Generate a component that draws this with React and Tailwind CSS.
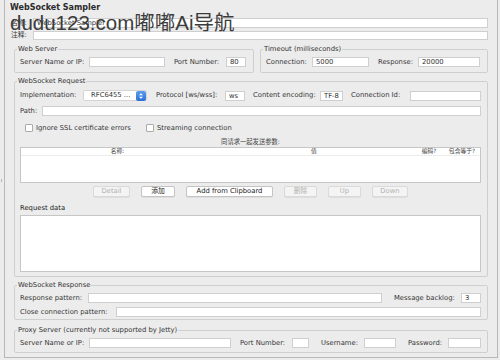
import React from "react";

function Field({ cls, value = "" }) {
  return (
    <input
      readOnly
      value={value}
      className={`h-[10px] bg-white border border-[#cfcfcf] px-[3px] text-[6.8px] text-[#333] outline-none leading-none ${cls}`}
    />
  );
}

function Btn({ cls, children, disabled }) {
  return (
    <div
      className={`h-[11px] flex items-center justify-center rounded-[2px] border shadow-[0_0.5px_0.5px_rgba(0,0,0,0.12)] whitespace-nowrap ${
        disabled ? "bg-[#f4f4f4] border-[#dadada] text-[#b2b2b2]" : "bg-white border-[#c4c4c4] text-[#222]"
      } ${cls}`}
    >
      {children}
    </div>
  );
}

function Check({ cls = "" }) {
  return <span className={`block w-[8px] h-[8px] shrink-0 bg-white border border-[#ababab] rounded-[1px] ${cls}`} />;
}

export default function App() {
  return (
    <div className="w-[500px] h-[360px] bg-[#ececec] relative overflow-hidden font-['DejaVu_Sans','Noto_Sans_CJK_SC',sans-serif] text-[6.8px] text-[#363636] leading-none">
      <div className="absolute left-[1px] top-[179px] w-[1px] h-[3px] bg-[#b4b4b4]" />

      <div className="ml-[4px] w-[494px] h-[358px] border-l border-r border-b border-[#b8b8b8]">
        <div className="ml-[5px] pt-[3px] h-[13px] text-[8px] font-bold text-[#2a2a2a] leading-[10px]">
          WebSocket Sampler
        </div>

        <div className="mt-[5px] ml-[6px] flex items-center h-[10px]">
          <span className="w-[22px] shrink-0">名称:</span>
          <Field cls="w-[455px] text-[#9a9a9a]" value="WebSocket Sampler" />
        </div>
        <div className="mt-[3px] ml-[6px] flex items-center h-[9px]">
          <span className="w-[22px] shrink-0">注释:</span>
          <Field cls="w-[455px] !h-[9px]" />
        </div>

        <div className="mt-[5px] ml-[9px] flex gap-[6px]">
          <fieldset className="min-w-0 w-[240px] border border-[#cfcfcf] rounded-[2px] pl-[5px] pr-[6px] pt-[4px] pb-[5px]">
            <legend className="-ml-[3px] px-[1px] h-[8px] leading-[8px] text-[#333]">Web Server</legend>
            <div className="flex items-center h-[10px]">
              <span className="w-[69px] shrink-0 whitespace-nowrap">Server Name or IP:</span>
              <Field cls="w-[76px]" />
              <span className="ml-[9px] w-[52px] shrink-0 whitespace-nowrap">Port Number:</span>
              <Field cls="w-[20px]" value="80" />
            </div>
          </fieldset>
          <fieldset className="min-w-0 w-[228px] border border-[#cfcfcf] rounded-[2px] pl-[5px] pr-[6px] pt-[4px] pb-[5px]">
            <legend className="-ml-[3px] px-[1px] h-[8px] leading-[8px] text-[#333]">Timeout (milliseconds)</legend>
            <div className="flex items-center h-[10px]">
              <span className="w-[46px] shrink-0 whitespace-nowrap">Connection:</span>
              <Field cls="w-[57px]" value="5000" />
              <span className="ml-[9px] w-[40px] shrink-0 whitespace-nowrap">Response:</span>
              <Field cls="w-[62px]" value="20000" />
            </div>
          </fieldset>
        </div>

        <fieldset className="min-w-0 mt-[4px] ml-[9px] w-[474px] border border-[#cfcfcf] rounded-[2px] pl-[5px] pr-[6px] pt-[5px] pb-[4px]">
          <legend className="-ml-[3px] px-[1px] h-[8px] leading-[8px] text-[#333]">WebSocket Request</legend>
          <div className="flex items-center h-[11px]">
            <span className="w-[63px] shrink-0 whitespace-nowrap">Implementation:</span>
            <div className="w-[64px] h-[11px] shrink-0 flex items-center bg-white rounded-[2px] border border-[#d4d4d4]">
              <span className="flex-1 pl-[7px] text-[#333] whitespace-nowrap">RFC6455 ...</span>
              <svg width="10" height="10" viewBox="0 0 10 10" className="shrink-0">
                <defs>
                  <linearGradient id="bg" x1="0" y1="0" x2="0" y2="1">
                    <stop offset="0" stopColor="#5b9cf0" />
                    <stop offset="1" stopColor="#2c6fd8" />
                  </linearGradient>
                </defs>
                <rect x="0" y="0" width="10" height="10" rx="2" fill="url(#bg)" />
                <path d="M3 4.3 L5 2.3 L7 4.3 Z" fill="#fff" />
                <path d="M3 5.7 L5 7.7 L7 5.7 Z" fill="#fff" />
              </svg>
            </div>
            <span className="ml-[9px] w-[69px] shrink-0 whitespace-nowrap">Protocol [ws/wss]:</span>
            <Field cls="w-[20px]" value="ws" />
            <span className="ml-[8px] w-[67px] shrink-0 whitespace-nowrap">Content encoding:</span>
            <Field cls="w-[23px]" value="TF-8" />
            <span className="ml-[8px] w-[59px] shrink-0 whitespace-nowrap">Connection Id:</span>
            <Field cls="flex-1 min-w-0" />
          </div>

          <div className="mt-[5px] flex items-center h-[10px]">
            <span className="w-[22px] shrink-0">Path:</span>
            <Field cls="flex-1 min-w-0" />
          </div>

          <div className="mt-[7px] flex items-center h-[10px]">
            <Check cls="ml-[5px]" />
            <span className="ml-[3px] w-[110px] shrink-0 whitespace-nowrap">Ignore SSL certificate errors</span>
            <Check />
            <span className="ml-[3px] whitespace-nowrap">Streaming connection</span>
          </div>

          <div className="mt-[5px] h-[8px] flex items-center justify-center text-[6.3px] text-[#444]">
            同请求一起发送参数:
          </div>

          <div className="mt-[1px] h-[36px] bg-white border border-[#c6c6c6] flex flex-col">
            <div className="h-[8px] grid grid-cols-[193px_200px_30px_36px] items-center text-center text-[5.8px] text-[#444] border-b border-[#ececec]">
              <span>名称:</span>
              <span>值</span>
              <span>编码?</span>
              <span>包含等于?</span>
            </div>
          </div>

          <div className="mt-[3px] flex justify-center gap-[11px]">
            <Btn cls="w-[37px]" disabled>Detail</Btn>
            <Btn cls="w-[34px]">添加</Btn>
            <Btn cls="w-[87px]">Add from Clipboard</Btn>
            <Btn cls="w-[33px]" disabled>删除</Btn>
            <Btn cls="w-[33px]" disabled>Up</Btn>
            <Btn cls="w-[36px]" disabled>Down</Btn>
          </div>

          <div className="mt-[7px] h-[8px] flex items-center text-[#222]">Request data</div>
          <div className="mt-[3px] h-[57px] bg-white border border-[#c6c6c6]" />
        </fieldset>

        <fieldset className="min-w-0 mt-[4px] ml-[9px] w-[474px] border border-[#cfcfcf] rounded-[2px] pl-[5px] pr-[6px] pt-[4px] pb-[2px]">
          <legend className="-ml-[3px] px-[1px] h-[8px] leading-[8px] text-[#333]">WebSocket Response</legend>
          <div className="flex items-center h-[10px]">
            <span className="w-[68px] shrink-0 whitespace-nowrap">Response pattern:</span>
            <Field cls="w-[294px]" />
            <span className="ml-[12px] w-[67px] shrink-0 whitespace-nowrap">Message backlog:</span>
            <Field cls="flex-1 min-w-0" value="3" />
          </div>
          <div className="mt-[4px] flex items-center h-[10px]">
            <span className="w-[96px] shrink-0 whitespace-nowrap">Close connection pattern:</span>
            <Field cls="flex-1 min-w-0" />
          </div>
        </fieldset>

        <fieldset className="min-w-0 mt-[6px] ml-[9px] w-[474px] border border-[#cfcfcf] rounded-[2px] pl-[5px] pr-[6px] pt-[4px] pb-[4px]">
          <legend className="-ml-[3px] px-[1px] h-[8px] leading-[8px] text-[#333]">Proxy Server (currently not supported by Jetty)</legend>
          <div className="flex items-center h-[10px]">
            <span className="w-[69px] shrink-0 whitespace-nowrap">Server Name or IP:</span>
            <Field cls="w-[142px]" />
            <span className="ml-[9px] w-[52px] shrink-0 whitespace-nowrap">Port Number:</span>
            <Field cls="w-[17px]" />
            <span className="ml-[12px] w-[43px] shrink-0 whitespace-nowrap">Username:</span>
            <Field cls="w-[32px]" />
            <span className="ml-[12px] w-[40px] shrink-0 whitespace-nowrap">Password:</span>
            <Field cls="flex-1 min-w-0" />
          </div>
        </fieldset>
      </div>

      <div className="absolute left-[10px] top-[12px] text-[20.5px] leading-[21px] text-[#3c3c3c] whitespace-nowrap font-['Liberation_Sans','Noto_Sans_CJK_SC',sans-serif]">
        dudu123.com嘟嘟Ai导航
      </div>
    </div>
  );
}
